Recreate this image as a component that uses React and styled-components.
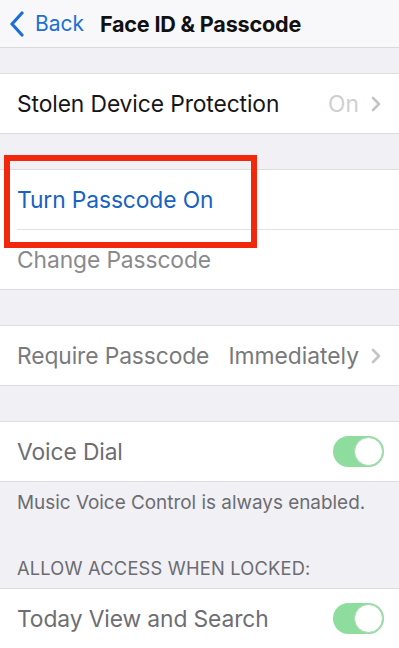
import React from "react"
import styled, { createGlobalStyle } from "styled-components"

const GlobalStyle = createGlobalStyle`
  body {
    margin: 0;
    background: #f0f0f5;
    font-family: Inter, "Liberation Sans", sans-serif;
    -webkit-font-smoothing: antialiased;
  }
`

const Screen = styled.div`
  width: 399px;
  height: 648px;
  overflow: hidden;
  background: #f0f0f5;
`

const NavBar = styled.div`
  position: relative;
  height: 47px;
  background: #f8f8fa;
  border-bottom: 1px solid #dadade;
  display: flex;
  align-items: center;
  justify-content: center;
`

const BackButton = styled.div`
  position: absolute;
  left: 9px;
  top: 0;
  height: 47px;
  display: flex;
  align-items: center;
  gap: 10px;
  color: #1c6fd6;
  font-size: 21px;
`

const Title = styled.div`
  font-size: 21.6px;
  font-weight: 700;
  color: #111;
  letter-spacing: -0.2px;
  margin-left: 2px;
`

const Gap = styled.div`
  height: ${p => p.$h}px;
`

const Group = styled.div`
  position: relative;
  background: #fff;
  border-top: 1px solid #dcdce1;
  border-bottom: ${p => (p.$open ? "none" : "1px solid #dcdce1")};
`

const Row = styled.div`
  height: 59px;
  display: flex;
  align-items: center;
  padding-right: 15px;
  margin-left: ${p => (p.$inset ? "17px" : "0")};
  padding-left: ${p => (p.$inset ? "0" : "17px")};
  border-top: ${p => (p.$divider ? "1px solid #e2e2e6" : "none")};
  border-bottom: ${p => (p.$bottomDivider ? "1px solid #e2e2e6" : "none")};
`

const Label = styled.div`
  flex: 1;
  font-size: 22.8px;
  color: ${p => p.$color || "#161618"};
  letter-spacing: -0.1px;
`

const Value = styled.div`
  font-size: 22.8px;
  color: ${p => p.$color};
  margin-right: 12px;
`

const Chevron = styled.svg`
  width: 10px;
  height: 16px;
  margin-right: 3px;
`

const Toggle = styled.div`
  position: relative;
  width: 51px;
  height: 31px;
  border-radius: 16px;
  background: #8edc9e;
`

const Knob = styled.div`
  position: absolute;
  right: 1px;
  top: 1px;
  width: 27px;
  height: 27px;
  border-radius: 50%;
  background: #fff;
  border: 1px solid #a7d9b0;
`

const Highlight = styled.div`
  position: absolute;
  left: 4px;
  top: -15px;
  width: 241px;
  height: 81px;
  border: 6px solid #f2280d;
  pointer-events: none;
`

const Footer = styled.div`
  padding: 9px 17px 0;
  height: 47px;
  font-size: 18.9px;
  color: #6c6c70;
`

const SectionHeader = styled.div`
  padding: 0 17px 9px;
  height: 50px;
  box-sizing: border-box;
  display: flex;
  align-items: flex-end;
  font-size: 18.3px;
  color: #6c6c70;
  letter-spacing: 0.2px;
`

const RightChevron = () => (
  <Chevron viewBox="0 0 10 16">
    <polyline
      points="2,2 8,8 2,14"
      fill="none"
      stroke="#c4c4c7"
      strokeWidth="2.6"
      strokeLinecap="round"
      strokeLinejoin="round"
    />
  </Chevron>
)

const Switch = () => (
  <Toggle>
    <Knob />
  </Toggle>
)

export default function App() {
  return (
    <Screen>
      <GlobalStyle />
      <NavBar>
        <BackButton>
          <svg width="16" height="26" viewBox="0 0 16 26">
            <polyline
              points="13,2 3,13 13,24"
              fill="none"
              stroke="#1c6fd6"
              strokeWidth="3.2"
              strokeLinecap="round"
              strokeLinejoin="round"
            />
          </svg>
          Back
        </BackButton>
        <Title>Face ID &amp; Passcode</Title>
      </NavBar>

      <Gap $h={25} />
      <Group>
        <Row>
          <Label>Stolen Device Protection</Label>
          <Value $color="#cfcfd2">On</Value>
          <RightChevron />
        </Row>
      </Group>

      <Gap $h={35} />
      <Group>
        <Row>
          <Label $color="#1763c4">Turn Passcode On</Label>
        </Row>
        <Row $inset $divider>
          <Label $color="#8a8a8e">Change Passcode</Label>
        </Row>
        <Highlight />
      </Group>

      <Gap $h={35} />
      <Group>
        <Row>
          <Label $color="#7a7a7e">Require Passcode</Label>
          <Value $color="#78787c">Immediately</Value>
          <RightChevron />
        </Row>
      </Group>

      <Gap $h={35} />
      <Group>
        <Row>
          <Label $color="#6e6e72">Voice Dial</Label>
          <Switch />
        </Row>
      </Group>
      <Footer>Music Voice Control is always enabled.</Footer>
      <SectionHeader>ALLOW ACCESS WHEN LOCKED:</SectionHeader>
      <Group $open>
        <Row $inset $bottomDivider>
          <Label $color="#6e6e72">Today View and Search</Label>
          <Switch />
        </Row>
      </Group>
    </Screen>
  )
}
